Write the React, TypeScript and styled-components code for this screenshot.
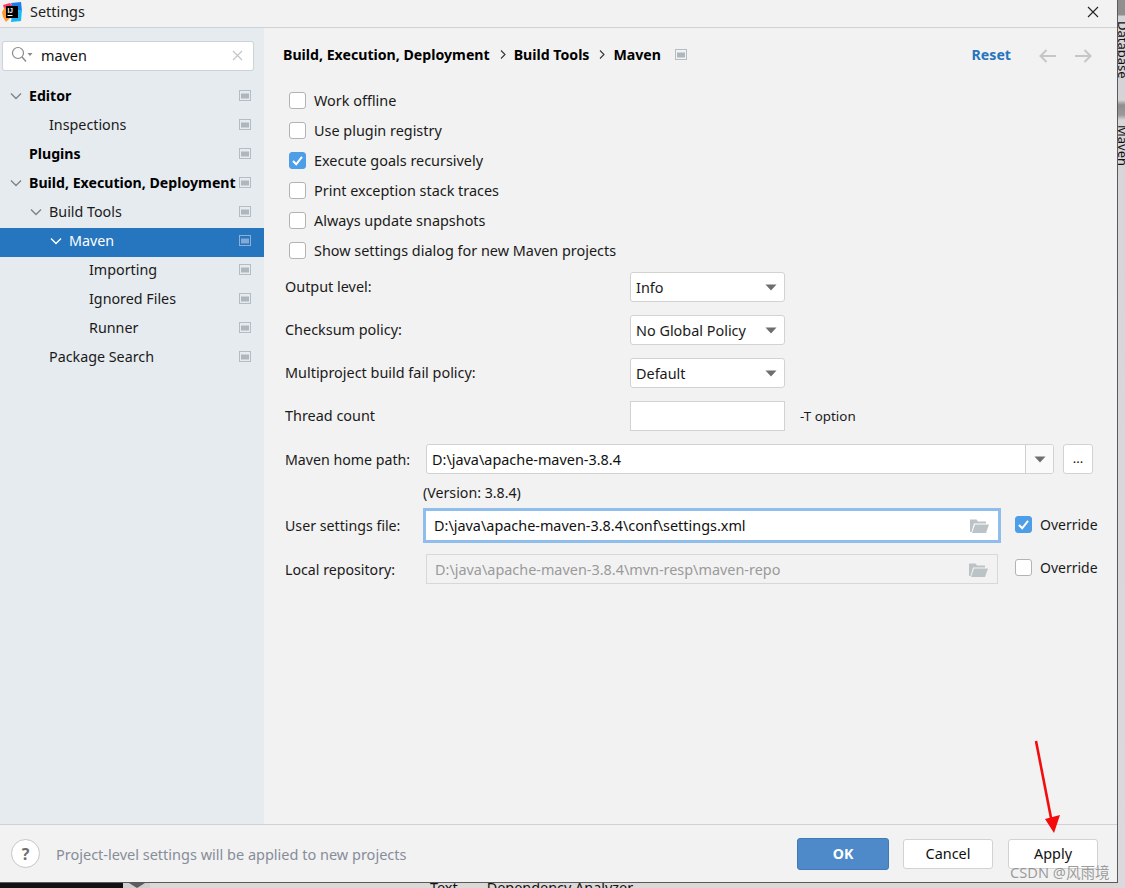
import React from "react";
import styled, { createGlobalStyle } from "styled-components";

const Global = createGlobalStyle`
  html, body { margin: 0; padding: 0; background: #d9d6d6; }
  * { box-sizing: border-box; }
  body { font-family: "Noto Sans", "Open Sans", "Liberation Sans", sans-serif; font-size: 14.42px; color: #111; }
`;

const Desktop = styled.div`
  position: relative;
  width: 1125px;
  height: 888px;
  overflow: hidden;
  display: grid;
  grid-template-columns: 1118px 7px;
  grid-template-rows: 883px 5px;
`;
const Dialog = styled.div`
  display: flex;
  flex-direction: column;
  background: #f2f2f2;
  border-right: 1px solid #5a5a5a;
  border-bottom: 1px solid #5a5a5a;
  min-height: 0;
`;
const TitleBar = styled.div`
  height: 28px;
  flex: none;
  display: flex;
  align-items: center;
  padding: 0 18px 4px 2px;
  gap: 8px;
  border-bottom: 1px solid #d1d1d1;
`;
const Title = styled.span`
  font-size: 14.42px;
  color: #222;
`;
const CloseButton = styled.span`
  margin-left: auto;
  display: flex;
`;
const Body = styled.div`
  flex: 1;
  display: flex;
  min-height: 0;
`;
const Sidebar = styled.aside`
  width: 264px;
  flex: none;
  background: #e6ebf0;
  padding-top: 13px;
`;
const SearchBox = styled.div`
  margin-left: 2px;
  width: 252px;
  height: 30px;
  background: #fff;
  border: 1px solid #ced3d8;
  border-radius: 3px;
  display: flex;
  align-items: center;
  padding: 0 10px 2px 8px;
  margin-bottom: 12px;
`;
const SearchText = styled.span`
  margin-left: 8px;
  color: #111;
`;
const SearchClear = styled.span`
  margin-left: auto;
  display: flex;
`;
const Tree = styled.div`
  display: flex;
  flex-direction: column;
`;
const TreeRow = styled.div<{ $level: number; $selected?: boolean }>`
  height: 29px;
  display: flex;
  align-items: center;
  padding: 0 13px 4px ${(p) => 9 + p.$level * 20}px;
  background: ${(p) => (p.$selected ? "#2675bf" : "transparent")};
  color: ${(p) => (p.$selected ? "#fff" : "#1a1a1a")};
`;
const ChevronSlot = styled.span`
  width: 20px;
  flex: none;
  display: flex;
`;
const TreeLabel = styled.span<{ $bold?: boolean }>`
  font-size: ${(p) => (p.$bold ? "14.15px" : "14.3px")};
  font-weight: ${(p) => (p.$bold ? 700 : 400)};
  color: ${(p) => (p.$bold ? "#000" : "inherit")};
  white-space: nowrap;
`;
const PageIconSlot = styled.span`
  margin-left: auto;
  display: flex;
`;
const Main = styled.main`
  flex: 1;
  padding-left: 21px;
  min-width: 0;
`;
const Header = styled.div`
  height: 57px;
  display: flex;
  align-items: center;
  margin-left: -2px;
  padding-right: 25px;
  padding-bottom: 5px;
`;
const Crumb = styled.span`
  font-weight: 700;
  font-size: 14.15px;
  color: #000;
  white-space: nowrap;
`;
const CrumbSep = styled.span`
  display: flex;
  margin: 0 8px 0 10px;
`;
const CrumbIcon = styled.span`
  display: flex;
  margin-left: 14px;
`;
const Reset = styled.span`
  margin-left: auto;
  color: #2675bf;
  font-weight: 700;
  font-size: 14.15px;
`;
const NavArrows = styled.span`
  display: flex;
  gap: 17px;
  margin-left: 28px;
  margin-top: 4px;
`;
const Checks = styled.div`
  display: flex;
  flex-direction: column;
  margin-left: 4px;
`;
const CheckRow = styled.label`
  height: 30px;
  display: flex;
  align-items: center;
  gap: 8px;
  color: #1a1a1a;
  white-space: nowrap;
`;
const Box = styled.span<{ $checked?: boolean }>`
  width: 17px;
  height: 17px;
  flex: none;
  border-radius: 3px;
  display: flex;
  align-items: center;
  justify-content: center;
  background: ${(p) => (p.$checked ? "#4d9ee6" : "#fff")};
  border: 1px solid ${(p) => (p.$checked ? "#4d9ee6" : "#b3b3b3")};
`;
const Policies = styled.div`
  margin-top: 7px;
  display: grid;
  grid-template-columns: 345px 155px auto;
  grid-auto-rows: 30px;
  row-gap: 13px;
  align-items: center;
`;
const FieldLabel = styled.span`
  color: #1a1a1a;
  white-space: nowrap;
`;
const PolicyLabel = styled(FieldLabel)`
  padding-bottom: 2px;
`;
const Combo = styled.div`
  height: 30px;
  background: #fff;
  border: 1px solid #d2d2d2;
  border-radius: 3px;
  display: flex;
  align-items: center;
  padding: 0 7px 0 5px;
  color: #1a1a1a;
  white-space: nowrap;
`;
const ComboArrow = styled.span`
  margin-left: auto;
  display: flex;
`;
const TextBox = styled.div`
  height: 30px;
  background: #fff;
  border: 1px solid #d2d2d2;
`;
const Hint = styled.span`
  margin-left: 15px;
  font-size: 13.4px;
  color: #1a1a1a;
`;
const PathRow = styled.div<{ $height: number; $top: number }>`
  height: ${(p) => p.$height}px;
  margin-top: ${(p) => p.$top}px;
  display: flex;
  align-items: center;
`;
const PathLabel = styled(FieldLabel)`
  width: 141px;
  flex: none;
  font-size: 14.2px;
`;
const HomeField = styled.div`
  width: 628px;
  height: 30px;
  display: flex;
  align-items: center;
  background: #fff;
  border: 1px solid #d2d2d2;
  border-radius: 3px;
  padding-left: 5px;
  overflow: hidden;
`;
const HomeArrow = styled.span`
  margin-left: auto;
  width: 28px;
  height: 100%;
  flex: none;
  display: flex;
  align-items: center;
  justify-content: center;
  background: #fafafa;
  border-left: 1px solid #cfcfcf;
`;
const BrowseButton = styled.span`
  margin-left: 9px;
  width: 30px;
  height: 30px;
  background: #fff;
  border: 1px solid #d2d2d2;
  border-radius: 3px;
  display: flex;
  justify-content: center;
  align-items: center;
  padding-bottom: 3px;
  font-size: 13px;
`;
const VersionText = styled.span`
  margin-left: 138px;
  font-size: 14.2px;
  color: #1a1a1a;
`;
const FileField = styled.div<{ $focus?: boolean; $disabled?: boolean }>`
  width: 572px;
  height: ${(p) => (p.$focus ? 29 : 30)}px;
  flex: none;
  display: flex;
  align-items: center;
  padding: 0 9px 0 8px;
  background: ${(p) => (p.$disabled ? "#f2f2f2" : "#fff")};
  color: ${(p) => (p.$disabled ? "#9a9a9a" : "#111")};
  border: ${(p) => (p.$disabled ? "1px solid #d8d8d8" : "none")};
  box-shadow: ${(p) => (p.$focus ? "0 0 0 3px #8fbdec" : "none")};
`;
const FolderSlot = styled.span`
  margin-left: auto;
  display: flex;
`;
const Override = styled(CheckRow)<{ $lift: number }>`
  margin-left: 17px;
  height: auto;
  font-size: 14px;
  margin-bottom: ${(p) => p.$lift}px;
`;
const Footer = styled.footer`
  height: 58px;
  flex: none;
  border-top: 1px solid #d1d1d1;
  display: flex;
  align-items: center;
  padding: 0 19px 0 11px;
`;
const Help = styled.span`
  width: 29px;
  height: 29px;
  border-radius: 50%;
  background: #fff;
  border: 1px solid #c6c6c6;
  display: flex;
  align-items: center;
  justify-content: center;
  font-weight: 700;
  font-size: 16px;
  color: #6e6e6e;
`;
const FooterNote = styled.span`
  margin-left: 16px;
  font-size: 14.5px;
  color: #868d99;
`;
const Buttons = styled.div`
  margin-left: auto;
  display: flex;
  align-items: center;
`;
const Button = styled.span<{ $primary?: boolean; $gap?: number }>`
  width: ${(p) => (p.$primary ? 92 : 90)}px;
  height: ${(p) => (p.$primary ? 32 : 30)}px;
  margin-left: ${(p) => p.$gap ?? 0}px;
  border-radius: 3px;
  display: flex;
  align-items: center;
  justify-content: center;
  font-size: ${(p) => (p.$primary ? "14.15px" : "14.42px")};
  font-weight: ${(p) => (p.$primary ? 700 : 400)};
  color: ${(p) => (p.$primary ? "#fff" : "#111")};
  background: ${(p) => (p.$primary ? "#4e8ac9" : "#fff")};
  border: 1px solid ${(p) => (p.$primary ? "#3f79b8" : "#d2d2d2")};
`;
const RightStrip = styled.div`
  background: linear-gradient(180deg, #8f8f8f 0, #8f8f8f 15px, #d4d4d8 16px, #d4d4d8 100px, #8e8e8e 105px, #9a9a9a 115px, #d6d6da 120px, #dadade 100%);
  overflow: hidden;
  display: flex;
  flex-direction: column;
  align-items: flex-start;
  padding-top: 21px;
  grid-row: 1 / 3;
  grid-column: 2;
`;
const StripText = styled.span<{ $top: number }>`
  writing-mode: vertical-rl;
  width: 17px;
  flex: none;
  font-size: 13px;
  line-height: 17px;
  margin-top: ${(p) => p.$top}px;
  margin-left: -4px;
  color: #111;
  white-space: nowrap;
`;
const BottomStrip = styled.div`
  display: flex;
  overflow: hidden;
  background: #dcd8d8;
  line-height: 10px;
  color: #111;
  grid-row: 2;
  grid-column: 1;
`;
const BlackPart = styled.div`
  width: 123px;
  flex: none;
  background: #111;
`;
const GreyPart = styled.div`
  width: 27px;
  flex: none;
  background: #cfcfcf;
  display: flex;
  justify-content: center;
`;
const StripLabel = styled.span<{ $left: number }>`
  margin-left: ${(p) => p.$left}px;
  white-space: nowrap;
`;
const Annotation = styled.svg`
  position: absolute;
  left: 1028px;
  top: 735px;
`;
const Watermark = styled.span`
  position: absolute;
  left: 1010px;
  top: 861px;
  font-family: "Noto Sans", "Noto Sans CJK SC", sans-serif;
  font-size: 14.6px;
  color: rgba(120, 120, 120, 0.72);
  white-space: nowrap;
`;

const Chevron = ({ color = "#7f8388" }: { color?: string }) => (
  <svg width="14" height="14" viewBox="0 0 14 14" fill="none">
    <path d="M2 4.5 7 9.5 12 4.5" stroke={color} strokeWidth="1.4" fill="none" />
  </svg>
);

const PageIcon = ({ dim }: { dim?: boolean }) => (
  <svg width="12" height="11" viewBox="0 0 12 11">
    <rect x="0.5" y="0.5" width="11" height="10" fill="none" stroke={dim ? "#8db0d4" : "#b4bcc4"} />
    <rect x="2" y="3.5" width="8" height="5" fill={dim ? "#85a9d0" : "#aeb6be"} />
  </svg>
);

const Caret = ({ color = "#6e6e6e" }: { color?: string }) => (
  <svg width="12" height="7" viewBox="0 0 12 7">
    <path d="M0.5 0.5H11.5L6 6.5Z" fill={color} />
  </svg>
);

const Check = () => (
  <svg width="13" height="13" viewBox="0 0 13 13" fill="none">
    <path d="M2 7 5.2 10.3 11 2.8" stroke="#fff" strokeWidth="2" />
  </svg>
);

const Folder = () => (
  <svg width="19" height="15" viewBox="0 0 19 15">
    <path d="M0 1.5H6.5L8 3.5H16V5.5H4L1.5 14H0Z" fill="#bcc3c6" />
    <path d="M5 6.5H19L16 15H2Z" fill="#bcc3c6" />
  </svg>
);

const Logo = () => (
  <svg width="20" height="20" viewBox="0 0 20 20">
    <path d="M1 3 8 1 12 5 4 14Z" fill="#fc3d6f" />
    <path d="M0 10 3 5 8 16 4 20 1 15Z" fill="#ff9b2a" />
    <path d="M9 1 19 0 20 9 12 8Z" fill="#1a7fe8" />
    <path d="M10 12 20 7 19 19 9 20Z" fill="#1cb6f2" />
    <rect x="4" y="4" width="12" height="12" fill="#000" />
    <text x="5.5" y="10.5" fontSize="6.5" fontWeight="700" fontFamily="Liberation Sans, sans-serif" fill="#fff">IJ</text>
    <rect x="5.5" y="13" width="5" height="1" fill="#fff" />
  </svg>
);

type Item = { label: string; level: number; bold?: boolean; open?: boolean; selected?: boolean };
const items: Item[] = [
  { label: "Editor", level: 0, bold: true, open: true },
  { label: "Inspections", level: 1 },
  { label: "Plugins", level: 0, bold: true },
  { label: "Build, Execution, Deployment", level: 0, bold: true, open: true },
  { label: "Build Tools", level: 1, open: true },
  { label: "Maven", level: 2, open: true, selected: true },
  { label: "Importing", level: 3 },
  { label: "Ignored Files", level: 3 },
  { label: "Runner", level: 3 },
  { label: "Package Search", level: 1 },
];

const checks = [
  { label: "Work offline" },
  { label: "Use plugin registry" },
  { label: "Execute goals recursively", checked: true },
  { label: "Print exception stack traces" },
  { label: "Always update snapshots" },
  { label: "Show settings dialog for new Maven projects" },
];

const policies = [
  { label: "Output level:", value: "Info" },
  { label: "Checksum policy:", value: "No Global Policy" },
  { label: "Multiproject build fail policy:", value: "Default" },
];

const CrumbArrow = () => (
  <svg width="6" height="9" viewBox="0 0 6 9" fill="none">
    <path d="M1 0.5 5 4.5 1 8.5" stroke="#333" strokeWidth="1.1" />
  </svg>
);

export default function App() {
  return (
    <>
      <Global />
      <Desktop>
        <Dialog>
          <TitleBar>
            <Logo />
            <Title>Settings</Title>
            <CloseButton>
              <svg width="12" height="12" viewBox="0 0 12 12">
                <path d="M1 1 11 11M11 1 1 11" stroke="#222" strokeWidth="1.1" />
              </svg>
            </CloseButton>
          </TitleBar>
          <Body>
            <Sidebar>
              <SearchBox>
                <svg width="22" height="18" viewBox="0 0 22 18" fill="none">
                  <circle cx="7" cy="7" r="5.5" stroke="#8a8a8a" strokeWidth="1.2" />
                  <path d="M11 11 15 15.5" stroke="#8a8a8a" strokeWidth="1.4" />
                  <path d="M16.5 7H21.5L19 10Z" fill="#8a8a8a" />
                </svg>
                <SearchText>maven</SearchText>
                <SearchClear>
                  <svg width="11" height="11" viewBox="0 0 11 11">
                    <path d="M1 1 10 10M10 1 1 10" stroke="#c4c4c4" strokeWidth="1.1" />
                  </svg>
                </SearchClear>
              </SearchBox>
              <Tree>
                {items.map((it) => (
                  <TreeRow key={it.label} $level={it.level} $selected={it.selected}>
                    <ChevronSlot>{it.open && <Chevron color={it.selected ? "#fff" : "#7f8388"} />}</ChevronSlot>
                    <TreeLabel $bold={it.bold}>{it.label}</TreeLabel>
                    <PageIconSlot>
                      <PageIcon dim={it.selected} />
                    </PageIconSlot>
                  </TreeRow>
                ))}
              </Tree>
            </Sidebar>
            <Main>
              <Header>
                <Crumb>Build, Execution, Deployment</Crumb>
                <CrumbSep>
                  <CrumbArrow />
                </CrumbSep>
                <Crumb>Build Tools</Crumb>
                <CrumbSep>
                  <CrumbArrow />
                </CrumbSep>
                <Crumb>Maven</Crumb>
                <CrumbIcon>
                  <PageIcon />
                </CrumbIcon>
                <Reset>Reset</Reset>
                <NavArrows>
                  <svg width="18" height="14" viewBox="0 0 18 14" fill="none">
                    <path d="M7.5 1 1.5 7 7.5 13M1.5 7H17" stroke="#c6c6c6" strokeWidth="2" />
                  </svg>
                  <svg width="18" height="14" viewBox="0 0 18 14" fill="none">
                    <path d="M10.5 1 16.5 7 10.5 13M16.5 7H1" stroke="#c6c6c6" strokeWidth="2" />
                  </svg>
                </NavArrows>
              </Header>
              <Checks>
                {checks.map((c) => (
                  <CheckRow key={c.label}>
                    <Box $checked={c.checked}>{c.checked && <Check />}</Box>
                    {c.label}
                  </CheckRow>
                ))}
              </Checks>
              <Policies>
                {policies.map((p) => (
                  <React.Fragment key={p.label}>
                    <PolicyLabel>{p.label}</PolicyLabel>
                    <Combo>
                      {p.value}
                      <ComboArrow>
                        <Caret />
                      </ComboArrow>
                    </Combo>
                    <span />
                  </React.Fragment>
                ))}
                <PolicyLabel>Thread count</PolicyLabel>
                <TextBox />
                <Hint>-T option</Hint>
              </Policies>
              <PathRow $height={30} $top={13}>
                <PathLabel>Maven home path:</PathLabel>
                <HomeField>
                  D:\java\apache-maven-3.8.4
                  <HomeArrow>
                    <Caret />
                  </HomeArrow>
                </HomeField>
                <BrowseButton>...</BrowseButton>
              </PathRow>
              <PathRow $height={37} $top={0}>
                <VersionText>(Version: 3.8.4)</VersionText>
              </PathRow>
              <PathRow $height={29} $top={0}>
                <PathLabel>User settings file:</PathLabel>
                <FileField $focus>
                  D:\java\apache-maven-3.8.4\conf\settings.xml
                  <FolderSlot>
                    <Folder />
                  </FolderSlot>
                </FileField>
                <Override $lift={2}>
                  <Box $checked>
                    <Check />
                  </Box>
                  Override
                </Override>
              </PathRow>
              <PathRow $height={30} $top={14}>
                <PathLabel>Local repository:</PathLabel>
                <FileField $disabled>
                  D:\java\apache-maven-3.8.4\mvn-resp\maven-repo
                  <FolderSlot>
                    <Folder />
                  </FolderSlot>
                </FileField>
                <Override $lift={3}>
                  <Box />
                  Override
                </Override>
              </PathRow>
            </Main>
          </Body>
          <Footer>
            <Help>?</Help>
            <FooterNote>Project-level settings will be applied to new projects</FooterNote>
            <Buttons>
              <Button $primary>OK</Button>
              <Button $gap={14}>Cancel</Button>
              <Button $gap={15}>Apply</Button>
            </Buttons>
          </Footer>
        </Dialog>
        <RightStrip>
          <StripText $top={0}>Database</StripText>
          <StripText $top={46}>Maven</StripText>
        </RightStrip>
        <BottomStrip>
          <BlackPart />
          <GreyPart>
            <svg width="16" height="5" viewBox="0 0 16 5">
              <path d="M0 0H16L8 5Z" fill="#5c5c5c" />
            </svg>
          </GreyPart>
          <StripLabel $left={280}>Text</StripLabel>
          <StripLabel $left={29}>Dependency Analyzer</StripLabel>
        </BottomStrip>
        <Annotation width="34" height="104" viewBox="0 0 34 104">
          <path d="M8 6 24 88" stroke="#f40b0b" strokeWidth="2.6" fill="none" />
          <path d="M17 84 32 80 26 98Z" fill="#f40b0b" />
        </Annotation>
        <Watermark>CSDN @风雨境</Watermark>
      </Desktop>
    </>
  );
}
